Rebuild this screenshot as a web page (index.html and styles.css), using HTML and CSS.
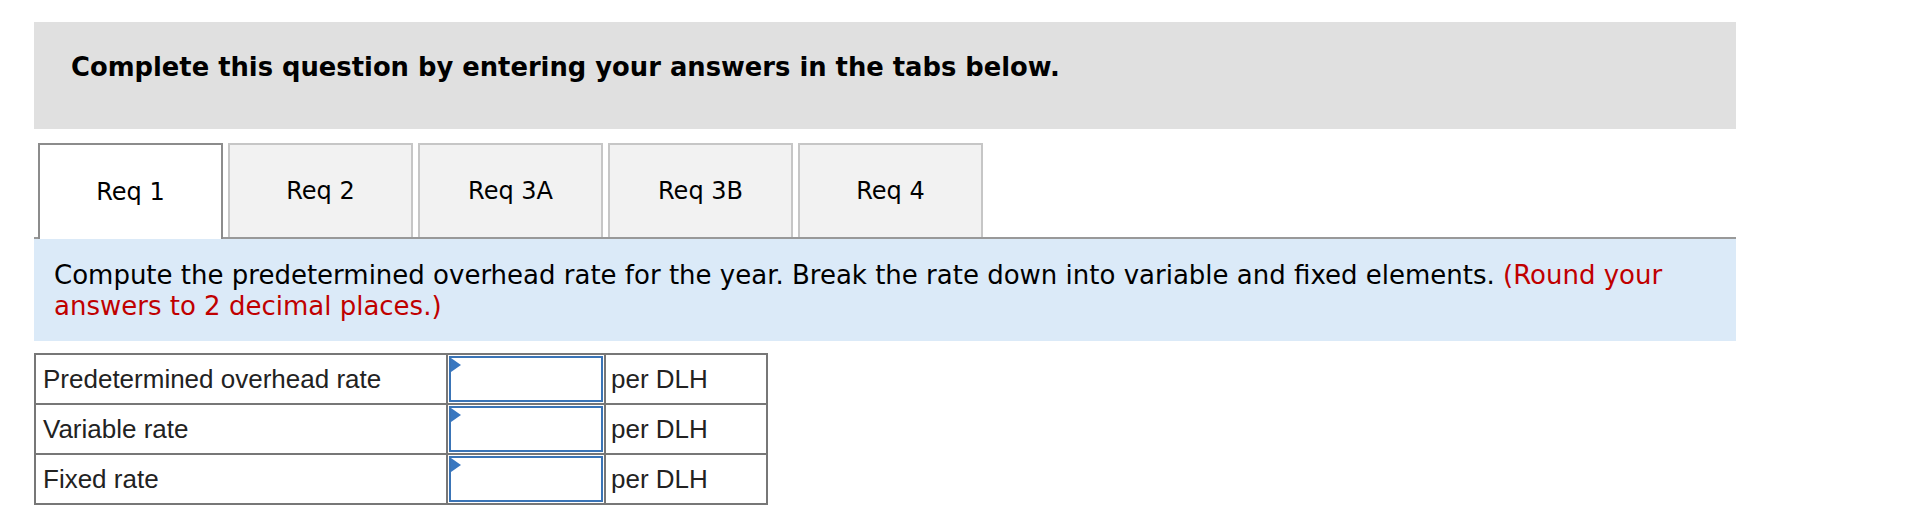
FILE: index.html
```html
<!DOCTYPE html>
<html lang="en">

<head>
    <meta charset="UTF-8">
    <title>Req 1</title>
    <link rel="stylesheet" href="styles.css">
</head>

<body>

    <div class="question">
        <div class="banner">Complete this question by entering your answers in the tabs below.</div>

        <div class="tabs">
            <div class="tab tab-active">Req 1</div>
            <div class="tab">Req 2</div>
            <div class="tab">Req 3A</div>
            <div class="tab">Req 3B</div>
            <div class="tab">Req 4</div>
        </div>

        <div class="prompt">
            Compute the predetermined overhead rate for the year. Break the rate down into variable and fixed elements.
            <span class="hint">(Round your answers to 2 decimal places.)</span>
        </div>

        <table class="answers">
            <tr>
                <td class="label">Predetermined overhead rate</td>
                <td class="entry"><div class="field"></div></td>
                <td class="unit">per DLH</td>
            </tr>
            <tr>
                <td class="label">Variable rate</td>
                <td class="entry"><div class="field"></div></td>
                <td class="unit">per DLH</td>
            </tr>
            <tr>
                <td class="label">Fixed rate</td>
                <td class="entry"><div class="field"></div></td>
                <td class="unit">per DLH</td>
            </tr>
        </table>
    </div>

</body>

</html>
```

FILE: styles.css
```css
body {
    margin: 0;
    background-color: #fff;
    font-family: "DejaVu Sans", Verdana, sans-serif;
    color: #000;
}

.question {
    width: 1702px;
    margin: 22px 0 0 34px;
}

.banner {
    background-color: #e0e0e0;
    height: 107px;
    box-sizing: border-box;
    padding: 30px 37px 0;
    font-size: 25.8px;
    font-weight: bold;
}

.tabs {
    display: flex;
    gap: 5px;
    margin-top: 14px;
    padding-left: 4px;
    border-bottom: 2px solid #999;
}

.tab {
    width: 185px;
    height: 94px;
    box-sizing: border-box;
    display: flex;
    align-items: center;
    justify-content: center;
    background-color: #f2f2f2;
    border: 2px solid #c6c6c6;
    border-bottom: none;
    font-size: 24px;
}

.tab-active {
    background-color: #fff;
    border-color: #8c8c8c;
    height: 96px;
    margin-bottom: -2px;
}

.prompt {
    background-color: #dbeaf8;
    padding: 21px 20px 19px;
    font-size: 26px;
    line-height: 31px;
}

.hint {
    color: #c00000;
}

.answers {
    margin-top: 12px;
    border-collapse: collapse;
    font-family: "Liberation Sans", Arial, sans-serif;
    font-size: 26px;
    color: #222;
}

.answers td {
    border: 2px solid #777;
    height: 46px;
    padding: 0;
}

.label {
    width: 403px;
    padding-left: 7px !important;
}

.entry {
    width: 156px;
}

.unit {
    width: 155px;
    padding-left: 5px !important;
}

.field {
    position: relative;
    height: 46px;
    margin: 1px;
    box-sizing: border-box;
    border: 2px solid #3a74b6;
    background-color: #fff;
}

.field::before {
    content: "";
    position: absolute;
    top: 0;
    left: 0;
    border-top: 7px solid transparent;
    border-bottom: 7px solid transparent;
    border-left: 10px solid #3a78c0;
}
```
